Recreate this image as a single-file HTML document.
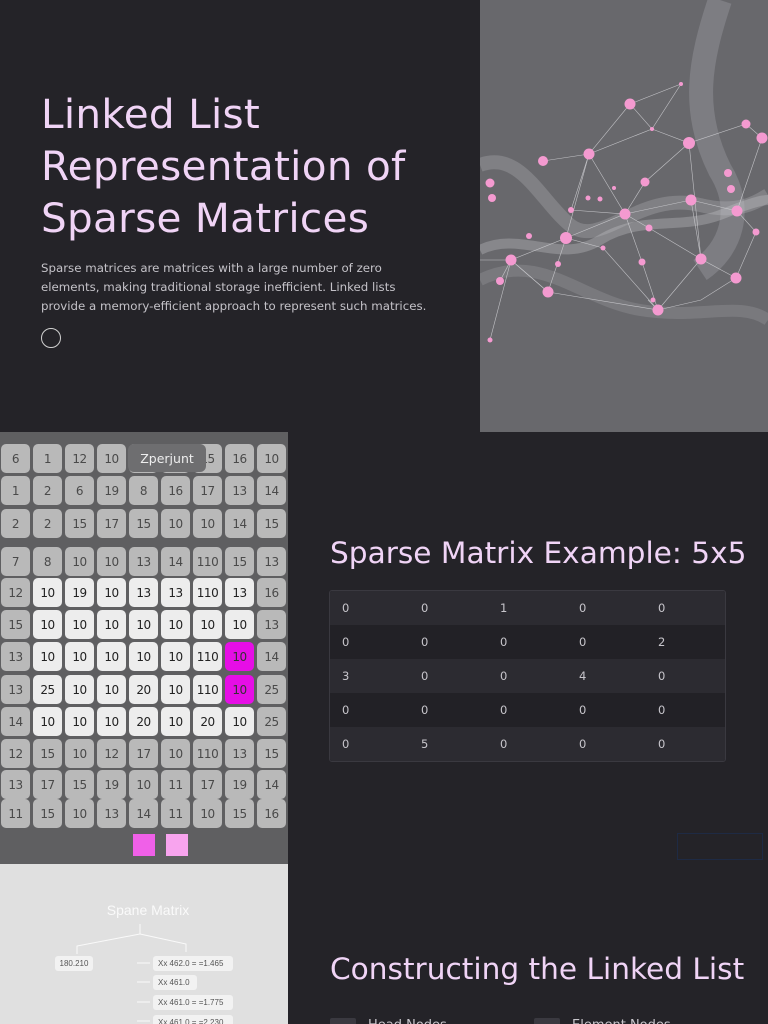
<!DOCTYPE html>
<html><head><meta charset="utf-8"><style>
*{margin:0;padding:0;box-sizing:border-box}
html,body{width:768px;height:1024px;overflow:hidden}
body{background:#242328;font-family:"DejaVu Sans","Liberation Sans",sans-serif;position:relative}
.abs{position:absolute}
h1{position:absolute;left:41px;top:88px;font-size:40.5px;line-height:52px;font-weight:normal;color:#f0d4f6;letter-spacing:0.3px}
.desc{position:absolute;left:41px;top:259px;width:395px;font-size:11.8px;line-height:19px;color:#c4c2c8}
.circ{position:absolute;left:41px;top:328px;width:20px;height:20px;border:1px solid #d0d0d0;border-radius:50%}
.grid{position:absolute;left:0;top:432px;width:288px;height:432px;background:#5f5f61;overflow:hidden}
.row{position:absolute;left:1px;display:flex;gap:3px}
.c{width:29px;height:29px;border-radius:5px;background:#b9b9b9;color:#4a4a4a;font-size:12px;display:flex;align-items:center;justify-content:center;letter-spacing:-0.5px}
.w{background:#ededed;color:#222}
.m{background:#e60ee6;color:#333}
h2{position:absolute;font-weight:normal;color:#f0d4f6;font-size:29.6px;white-space:nowrap}
table{position:absolute;left:329px;top:590px;width:397px;border:1px solid #3a3940;border-radius:3px;border-collapse:separate;border-spacing:0;overflow:hidden}
td{height:34px;font-size:11.5px;color:#c8c6cc;padding-left:12px;width:79px}
tr:nth-child(odd) td{background:#2c2b31}
tr:nth-child(even) td{background:#222126}
</style></head><body>
<h1>Linked List<br>Representation of<br>Sparse Matrices</h1>
<div class="desc">Sparse matrices are matrices with a large number of zero elements, making traditional storage inefficient. Linked lists provide a memory-efficient approach to represent such matrices.</div>
<div class="circ"></div>

<svg class="abs" style="left:480px;top:0" width="288" height="432" viewBox="480 0 288 432">
<rect x="480" y="0" width="288" height="432" fill="#68686c"/>
<path d="M720 0 C700 60 690 110 720 170 C745 210 730 250 700 270" stroke="#bdbdc2" stroke-width="24" fill="none" opacity="0.25"/>
<path d="M480 165 C520 150 540 200 570 225 C600 250 640 190 700 205 C740 215 760 200 768 195" stroke="#c8c8cc" stroke-width="14" fill="none" opacity="0.25"/>
<path d="M480 250 C520 230 560 265 600 240 C640 215 680 230 720 215 C745 205 760 200 768 200" stroke="#d0d0d4" stroke-width="10" fill="none" opacity="0.3"/>
<path d="M480 280 C540 250 580 300 640 310 C700 320 740 300 768 320" stroke="#c0c0c4" stroke-width="12" fill="none" opacity="0.2"/>
<g stroke="#d8d8dc" stroke-width="0.6" fill="none" opacity="0.8">
<polyline points="630,104 681,84 652,129 689,143 746,124 762,138"/>
<polyline points="543,161 589,154 630,104 652,129 589,154 571,210 625,214 645,182 689,143 701,259 658,310 648,300"/>
<polyline points="589,154 566,238 511,260 490,340"/>
<polyline points="589,154 625,214 642,262 658,310 548,292 511,260 500,281"/>
<polyline points="625,214 691,200 737,211 756,232 736,278 701,259 691,200"/>
<polyline points="566,238 625,214 649,228 701,259"/>
<polyline points="737,211 762,138"/><polyline points="548,292 566,238 603,248 658,310"/>
<polyline points="480,260 511,260 548,292"/><polyline points="736,278 701,300 658,310"/>
</g>
<g fill="#f49ad0">
<circle cx="630" cy="104" r="5.5"/><circle cx="689" cy="143" r="6"/><circle cx="589" cy="154" r="5.5"/><circle cx="543" cy="161" r="5"/>
<circle cx="625" cy="214" r="5.5"/><circle cx="691" cy="200" r="5.5"/><circle cx="737" cy="211" r="5.5"/><circle cx="746" cy="124" r="4.5"/>
<circle cx="566" cy="238" r="6"/><circle cx="511" cy="260" r="5.5"/><circle cx="701" cy="259" r="5.5"/><circle cx="658" cy="310" r="5.5"/>
<circle cx="548" cy="292" r="5.5"/><circle cx="736" cy="278" r="5.5"/><circle cx="490" cy="183" r="4.5"/><circle cx="492" cy="198" r="4"/>
<circle cx="645" cy="182" r="4.5"/><circle cx="649" cy="228" r="3.5"/><circle cx="642" cy="262" r="3.5"/><circle cx="603" cy="248" r="2.5"/>
<circle cx="500" cy="281" r="4"/><circle cx="490" cy="340" r="2.5"/><circle cx="756" cy="232" r="3.5"/><circle cx="731" cy="189" r="4"/>
<circle cx="728" cy="173" r="4"/><circle cx="762" cy="138" r="5.5"/><circle cx="681" cy="84" r="2"/><circle cx="652" cy="129" r="2"/>
<circle cx="571" cy="210" r="3"/><circle cx="588" cy="198" r="2.5"/><circle cx="529" cy="236" r="3"/><circle cx="558" cy="264" r="3"/>
<circle cx="653" cy="300" r="2.5"/><circle cx="600" cy="199" r="2.5"/><circle cx="614" cy="188" r="2"/>
</g>
</svg>

<div class="grid">
<div class="row" style="top:12px"><div class="c">6</div><div class="c">1</div><div class="c">12</div><div class="c">10</div><div class="c">15</div><div class="c">15</div><div class="c">15</div><div class="c">16</div><div class="c">10</div></div>
<div class="abs" style="left:128px;top:12px;width:78px;height:28px;background:#6e6e70;border-radius:6px;color:#eee;font-size:12.5px;display:flex;align-items:center;justify-content:center">Zperjunt</div>
<div class="row" style="top:44px"><div class="c">1</div><div class="c">2</div><div class="c">6</div><div class="c">19</div><div class="c">8</div><div class="c">16</div><div class="c">17</div><div class="c">13</div><div class="c">14</div></div>
<div class="row" style="top:77px"><div class="c">2</div><div class="c">2</div><div class="c">15</div><div class="c">17</div><div class="c">15</div><div class="c">10</div><div class="c">10</div><div class="c">14</div><div class="c">15</div></div>
<div class="row" style="top:115px"><div class="c">7</div><div class="c">8</div><div class="c">10</div><div class="c">10</div><div class="c">13</div><div class="c">14</div><div class="c">110</div><div class="c">15</div><div class="c">13</div></div>
<div class="row" style="top:146px"><div class="c">12</div><div class="c w">10</div><div class="c w">19</div><div class="c w">10</div><div class="c w">13</div><div class="c w">13</div><div class="c w">110</div><div class="c w">13</div><div class="c">16</div></div>
<div class="row" style="top:178px"><div class="c">15</div><div class="c w">10</div><div class="c w">10</div><div class="c w">10</div><div class="c w">10</div><div class="c w">10</div><div class="c w">10</div><div class="c w">10</div><div class="c">13</div></div>
<div class="row" style="top:210px"><div class="c">13</div><div class="c w">10</div><div class="c w">10</div><div class="c w">10</div><div class="c w">10</div><div class="c w">10</div><div class="c w">110</div><div class="c m">10</div><div class="c">14</div></div>
<div class="row" style="top:243px"><div class="c">13</div><div class="c w">25</div><div class="c w">10</div><div class="c w">10</div><div class="c w">20</div><div class="c w">10</div><div class="c w">110</div><div class="c m">10</div><div class="c">25</div></div>
<div class="row" style="top:275px"><div class="c">14</div><div class="c w">10</div><div class="c w">10</div><div class="c w">10</div><div class="c w">20</div><div class="c w">10</div><div class="c w">20</div><div class="c w">10</div><div class="c">25</div></div>
<div class="row" style="top:307px"><div class="c">12</div><div class="c">15</div><div class="c">10</div><div class="c">12</div><div class="c">17</div><div class="c">10</div><div class="c">110</div><div class="c">13</div><div class="c">15</div></div>
<div class="row" style="top:338px"><div class="c">13</div><div class="c">17</div><div class="c">15</div><div class="c">19</div><div class="c">10</div><div class="c">11</div><div class="c">17</div><div class="c">19</div><div class="c">14</div></div>
<div class="row" style="top:367px"><div class="c">11</div><div class="c">15</div><div class="c">10</div><div class="c">13</div><div class="c">14</div><div class="c">11</div><div class="c">10</div><div class="c">15</div><div class="c">16</div></div>
<div class="abs" style="left:133px;top:402px;width:22px;height:22px;background:#f060e8"></div>
<div class="abs" style="left:166px;top:402px;width:22px;height:22px;background:#f8a4ee"></div>
</div>

<h2 style="left:330px;top:536px">Sparse Matrix Example: 5x5</h2>
<table>
<tr><td>0</td><td>0</td><td>1</td><td>0</td><td>0</td></tr>
<tr><td>0</td><td>0</td><td>0</td><td>0</td><td>2</td></tr>
<tr><td>3</td><td>0</td><td>0</td><td>4</td><td>0</td></tr>
<tr><td>0</td><td>0</td><td>0</td><td>0</td><td>0</td></tr>
<tr><td>0</td><td>5</td><td>0</td><td>0</td><td>0</td></tr>
</table>
<div class="abs" style="left:677px;top:833px;width:86px;height:27px;border:1px solid #1e2a44"></div>

<div class="abs" style="left:0;top:864px;width:288px;height:160px;background:#e0e0e0;font-family:'Liberation Sans',sans-serif;overflow:hidden">
<div class="abs" style="left:0;width:296px;top:38px;text-align:center;color:#fafafa;font-size:14px">Spane Matrix</div>
<svg class="abs" style="left:0;top:0" width="288" height="160"><g stroke="#fafafa" stroke-width="1" fill="none"><path d="M140 60 V70 L77 82 V90 M140 70 L186 80 V88"/><path d="M137 99 H150 M137 118 H150 M137 138 H150 M137 157 H150"/></g></svg>
<div class="abs" style="left:55px;top:92px;width:38px;height:15px;background:#f2f2f2;border-radius:3px;font-size:8px;color:#555;text-align:center;line-height:15px">180.210</div>
<div class="abs" style="left:153px;top:92px;width:80px;height:15px;background:#f2f2f2;border-radius:3px;font-size:8px;color:#555;padding-left:5px;line-height:15px">Xx 462.0 = =1.465</div>
<div class="abs" style="left:153px;top:111px;width:44px;height:15px;background:#f2f2f2;border-radius:3px;font-size:8px;color:#555;padding-left:5px;line-height:15px">Xx 461.0</div>
<div class="abs" style="left:153px;top:131px;width:80px;height:15px;background:#f2f2f2;border-radius:3px;font-size:8px;color:#555;padding-left:5px;line-height:15px">Xx 461.0 = =1.775</div>
<div class="abs" style="left:153px;top:151px;width:80px;height:15px;background:#f2f2f2;border-radius:3px;font-size:8px;color:#555;padding-left:5px;line-height:15px">Xx 461.0 = =2.230</div>
</div>

<h2 style="left:330px;top:952px">Constructing the Linked List</h2>
<div class="abs" style="left:330px;top:1018px;width:26px;height:20px;background:#3a3940;border-radius:2px"></div>
<div class="abs" style="left:368px;top:1018px;font-size:13px;color:#c8c6cc">Head Nodes</div>
<div class="abs" style="left:534px;top:1018px;width:26px;height:20px;background:#3a3940;border-radius:2px"></div>
<div class="abs" style="left:572px;top:1018px;font-size:13px;color:#c8c6cc">Element Nodes</div>
</body></html>
